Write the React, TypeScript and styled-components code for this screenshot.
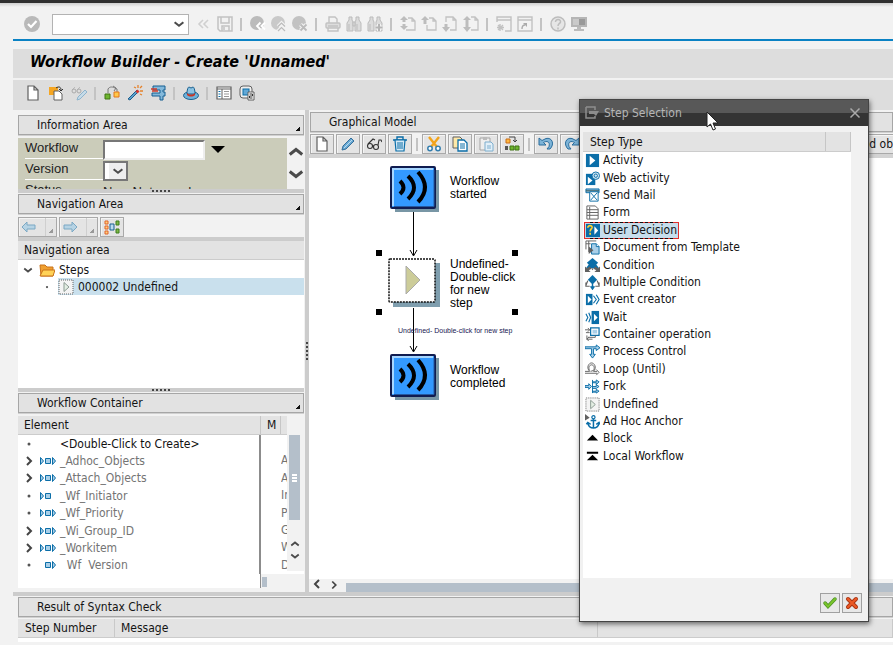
import React from "react";
import styled, { createGlobalStyle } from "styled-components";

const Global = createGlobalStyle`
  *, *::before, *::after { box-sizing: border-box; }
  html, body, #root { height: 100%; }
  body { margin: 0; background: #f2f2f2; color: #141414; font: 12px/16px "DejaVu Sans Condensed", "Noto Sans", sans-serif; overflow: hidden; }
  button, input, select { font: inherit; color: inherit; border-radius: 0; }
  table { border-spacing: 0; }
  th { font-weight: 400; text-align: left; }
  svg { display: block; flex: none; }
`;

/* ---------- icons ---------- */
const B = "#0b6ea8";
const L = "#a9cfe8";
const G = "#606060";
const D = "#c2c2c2";

const glyphs: Record<string, React.ReactNode> = {
  ok: <><circle cx="8" cy="8" r="8" fill="#b9b9b9" /><path d="M4 8l3 3 5.500-6" fill="none" stroke="#fff" strokeWidth="2.200" /></>,
  save: <g fill="none" stroke={D} strokeWidth="1.500"><path d="M1 1h14v14H3l-2-2zM4 1v6h8V1M5 15v-5h7v5M7 11v3" /></g>,
  back: <><circle cx="7" cy="7" r="7" fill="#bbb" /><path d="M10.500 6.500L7 10l3.500 3.500M15 6.500L11.500 10l3.500 3.500" fill="none" stroke="#fff" strokeWidth="1.800" /></>,
  up: <><circle cx="7" cy="7" r="7" fill="#c9c9c9" /><path d="M7 10.500L10.500 7l3.500 3.500M7 15l3.500-3.500L14 15" fill="none" stroke="#f2f2f2" strokeWidth="3.500" /><path d="M7 10.500L10.500 7l3.500 3.500M7 15l3.500-3.500L14 15" fill="none" stroke="#bbb" strokeWidth="1.200" /></>,
  cancel: <><circle cx="7" cy="7" r="7" fill="#c2c2c2" /><path d="M8.500 8.500l6 6M14.500 8.500l-6 6" stroke="#f2f2f2" strokeWidth="4" /><path d="M8.500 8.500l6 6M14.500 8.500l-6 6" stroke="#bbb" strokeWidth="1.800" /></>,
  print: <g fill="none" stroke={D} strokeWidth="1.400"><path d="M4 7V1h6l2 2v4" /><rect x="1" y="7" width="14" height="5" rx="1" fill="#ddd" /><path d="M3 12v3h10v-3M3 10h10" /></g>,
  find: <g fill="#dcdcdc" stroke="#bbb"><path d="M3 4V1h3v3l1 2v9H1V7zM10 4V1h3v3l2 3v8H9V6z" /><path d="M7 6h2v4H7zM3 8v6M11 8v6" /></g>,
  findnext: <g fill="#dcdcdc" stroke="#bbb"><path d="M3 4V1h3v3l1 2v9H1V7zM10 4V1h3v3l2 3v8H9V6zM3 8v6" /><path d="M12 8v7M8.500 11.500h7" stroke="#f2f2f2" strokeWidth="4" /><path d="M12 8v7M8.500 11.500h7" stroke="#b5b5b5" strokeWidth="2" /></g>,
  first: <g fill="none" stroke={D} strokeWidth="1.300"><path d="M8 2h4l3 3v9H6M12 2v3h3" /><path d="M4 0l4 4H5.500v2h-3V4H0zM4 14l4-4H5.500V8h-3v2H0z" fill="#bdbdbd" stroke="none" /></g>,
  prev: <g fill="none" stroke={D} strokeWidth="1.300"><path d="M8 2h4l3 3v9H6V9M12 2v3h3" /><path d="M4 0l4 4H5.500v4h-3V4H0z" fill="#bdbdbd" stroke="none" /></g>,
  next: <g fill="none" stroke={D} strokeWidth="1.300"><path d="M4 6V1h7l3 3v10H8M11 1v3h3" /><path d="M4 16l4-5H5.500V8h-3v3H0z" fill="#bdbdbd" stroke="none" /></g>,
  last: <g fill="none" stroke={D} strokeWidth="1.300"><path d="M8 1h4l3 3v10H8M12 1v3h3" /><path d="M4 0l4 4H5.500v7H8l-4 5-4-5h2.500V4H0z" fill="#bdbdbd" stroke="none" /></g>,
  session: <g fill="none" stroke={D} strokeWidth="1.400"><path d="M1 6V1h14v14H9M1 4h14" /><path d="M4 8v7M1 11.500h7M2 9l5 5M7 9l-5 5" /></g>,
  shortcut: <g fill="none" stroke={D} strokeWidth="1.400"><path d="M1 1h14v14H1zM1 4h14" /><path d="M5 13c0-3 1-4 3-4" stroke="#aaa" /><path d="M6 7h4v4z" fill="#aaa" stroke="none" /></g>,
  help: <><circle cx="8" cy="8" r="7" fill="#e6e6e6" stroke="#bdbdbd" strokeWidth="1.500" /><path d="M5.500 6c0-3.500 5.500-3 5 0-.3 1.500-2.500 1.500-2.500 4M8 11.500v2" fill="none" stroke="#bdbdbd" strokeWidth="1.500" /></>,
  monitor: <><path d="M0 1h16v10H0z" fill="#b5b5b5" /><path d="M2 3h6v6H2z" fill="#c9c9c9" /><path d="M8 3h6v6H8z" fill="#999" /><path d="M6 11h4v2h3v2H3v-2h3z" fill="#bbb" /></>,
  page: <path d="M3 1h6l4 4v10H3zM9 1v4h4" fill="#fff" stroke={G} strokeWidth="1.200" />,
  copyTo: <><path d="M1 2h9v8H1z" fill="#f5a623" /><path d="M6 6h5l3 3v6H6z" fill="#fff" stroke={G} /><path d="M8 3c3-2 5-1 5 2M11 4l2 2 2-2" fill="none" stroke="#333" /></>,
  display: <g fill="none"><path d="M1 5l3-3M6 5l3-3" stroke="#bbb" /><circle cx="3" cy="6" r="2" stroke="#aaa" /><circle cx="8" cy="6" r="2" stroke="#aaa" /><path d="M6 15l1-3 7-7 2 2-7 7z" fill="#c6dbe8" stroke="#8eb4cd" /></g>,
  model: <><path d="M4 8V4c2-3 5-2 7-1l2 1v3M9 1l3 2-2 3" fill="none" stroke="#777" /><path d="M1 9h5v5H1z" fill="#6eb52f" stroke="#407514" /><path d="M10 7h5v5h-5z" fill="#ffc849" stroke="#e2761b" /></>,
  wand: <><path d="M1 14L10 5l1.500 1.500L3 15z" fill="#5aa1cc" stroke="#1f5f8f" /><path d="M8.500 6.500l2-2 2 2-2 2z" fill="#d8342a" /><path d="M11 0v3M15 1l-2 2M13 6h3M13 9l2 1M7 2l2 1" stroke="#e5822b" strokeWidth="1.300" /></>,
  clamp: <><path d="M3 1h12v4h-2v2h2v4h-2v4h-3v-4H2V8h8V5H3z" fill="#83b8da" stroke="#155f92" /><path d="M1 4h6M2 6h6" stroke="#d23b2a" strokeWidth="1.500" /></>,
  hat: <><ellipse cx="8" cy="10.500" rx="7.500" ry="4" fill="#6fb2da" stroke="#1b618f" /><path d="M4 9c0-4 1-7 2-7l2 1 2-1c1 0 2 3 2 7z" fill="#8cc3e3" stroke="#1b618f" /><path d="M4 8c2 2 6 2 8 0v2c-2 2-6 2-8 0z" fill="#c93625" /></>,
  list: <><path d="M1 2h14v12H1z" fill="#fff" stroke={G} strokeWidth="1.200" /><path d="M1 4h14M6 4v10" stroke={G} /><path d="M2.500 6.500h2M2.500 9h2M2.500 11.500h2" stroke={B} /><path d="M8 6.500h5M8 9h5M8 11.500h5" stroke="#999" /></>,
  basic: <><rect x="1" y="1" width="12" height="12" rx="3" fill="#eee" stroke={G} /><rect x="4" y="4" width="6" height="6" fill="#62a8d6" stroke={B} /><path d="M9 7h6v8H9z" fill="#fff" stroke={G} /><path d="M10.500 9h3v2h-3v2h3" fill="none" stroke="#333" /></>,
  arrowL: <path d="M1 8l5-5v3h8v4H6v3z" fill="#b6d3e4" stroke="#7ba8c4" />,
  arrowR: <path d="M15 8l-5-5v3H2v4h8v3z" fill="#b6d3e4" stroke="#7ba8c4" />,
  tree: <><path d="M1 2h3v3H1zM1 7h3v3H1zM1 12h3v3H1z" fill="#ffd27a" stroke="#e2622a" /><path d="M6 5h4v6H6z" fill="#bcdcf0" stroke="#1b618f" /><path d="M12 2h3v4h-3zM12 10h3v4h-3z" fill="#7cba46" stroke="#3e7a1c" /></>,
  folder: <><path d="M1 3h5l2 2h6v9H2z" fill="#f0a030" stroke="#c9721a" /><path d="M1 14l3-6h12l-2 6z" fill="#ffd257" stroke="#c9721a" /></>,
  undefinedStep: <><path d="M1 1h14v14H1z" fill="#f4f4f4" stroke="#666" strokeDasharray="1 1" /><path d="M6 3.500l5 4.500-5 4.500z" fill="#e3eee3" stroke="#8b9a92" /></>,
  pencil: <><path d="M2 14l1-4 8-8 3 3-8 8z" fill="#69a9d3" stroke="#356f9b" /><path d="M4 12l8-8" stroke="#bcdcf0" /></>,
  glasses: <g fill="none" stroke="#333" strokeWidth="1.100"><circle cx="4" cy="10" r="2.500" /><circle cx="10" cy="11" r="2.500" /><path d="M6.500 10l1.500 0M2 8l5-5 2 1M12 9l1-5 2 0 1 2" /></g>,
  trash: <><path d="M1 4h14M5 4V1h6v3" fill="none" stroke={B} strokeWidth="1.400" /><path d="M3 4h10l-1 11H4z" fill="#d5e9f5" stroke={B} strokeWidth="1.200" /><path d="M6 6v7M8 6v7M10 6v7" stroke={B} /></>,
  cut: <><path d="M3 1l8 10M13 1L5 11" stroke="#f2a41c" strokeWidth="2.400" /><circle cx="4" cy="12.500" r="2.200" fill="#fff" stroke="#347eae" strokeWidth="1.500" /><circle cx="12" cy="12.500" r="2.200" fill="#fff" stroke="#347eae" strokeWidth="1.500" /></>,
  copy: <><path d="M1 1h7l2 2v9H1z" fill="#ffe9a8" stroke={G} /><path d="M6 4h6l3 3v8H6z" fill="#fff" stroke={B} strokeWidth="1.300" /><path d="M8 8h5M8 10h5M8 12h5" stroke={B} /></>,
  paste: <><path d="M2 2h10v12H2z" fill="#eee" stroke="#a5a5a5" /><path d="M5 1h4v3H5z" fill="#bbb" /><path d="M7 6h6l2 2v7H7z" fill="#e2eff8" stroke="#7daece" /><path d="M9 10h4M9 12h4" stroke="#7daece" /></>,
  insert: <><path d="M2 3h4v4H2z" fill="#ffb83e" stroke="#c86c18" /><path d="M5 1h6v5M9 4l2 2 2-2" fill="none" stroke="#444" /><path d="M1 10h3v4H1z" fill="#555" /><path d="M6 10h4v4H6zM11 10h4v4h-4z" fill="#6eb52f" stroke="#407514" /></>,
  undo: <path d="M1 2v7h7L5.500 6.500c3-2 7-1 5.500 4L9 13h3c5-5 2-12-4-10.500L4 4.500z" fill="#7db4d8" stroke="#2a6d9c" />,
  redo: <path d="M15 2v7H8l2.500-2.500c-3-2-7-1-5.500 4L7 13H4C-1 8 2 1 8 2.500l4 2z" fill="#7db4d8" stroke="#2a6d9c" />,
  activity: <><path d="M1 1h14v14H1z" fill={B} /><path d="M5 3l6 5-6 5z" fill="#fff" /></>,
  web: <><path d="M1 3h10v12H1z" fill={B} /><path d="M3 6l5 4-5 4z" fill="#fff" /><circle cx="11.500" cy="5" r="4" fill="#d4e8f3" stroke={B} /><circle cx="11.500" cy="5" r="1.800" fill="none" stroke={B} /></>,
  mail: <><path d="M1 1h14v4H1z" fill="#8ab9d6" stroke={B} /><path d="M1 3h14" stroke="#355" /><path d="M5 4h9v10H5z" fill="#fff" stroke={B} /><path d="M6 5l7 8M13 5l-7 8" stroke={B} /></>,
  form: <><path d="M2 1h9l3 3v11H2z" fill="#fff" stroke={G} /><path d="M2 5h12M2 8h12M2 11h12M5 2v13" stroke={G} /></>,
  decision: <><path d="M1 1h15v14H1z" fill={B} /><path d="M3 5c0-3 5-3 4.500 0-.3 1.500-2 1.500-2 4M5.500 10.500v2" fill="none" stroke="#ffd02c" strokeWidth="1.800" /><path d="M10 3.500l4 4.500-4 4.500z" fill="#fff" /></>,
  template: <><path d="M1 10V1h11M4 1v12M1 4h5" fill="none" stroke={G} /><path d="M7 4h5l3 3v8H7z" fill={L} stroke={B} /><path d="M12 4v3h3" fill="#fff" stroke={B} /><path d="M4 7l5 4-5 4z" fill={G} /></>,
  condition: <><path d="M8 0l6 5-3 3H5L2 5z" fill={B} /><path d="M4 7h8l3 4H1z" fill={B} /><path d="M0 15V9l2 2 3-2 3 4 3-4 3 2 2-2v6h-6l2-2-4-2-4 2 2 2z" fill={G} /></>,
  multi: <><path d="M8 0l5 5-5 5-5-5z" fill={B} /><path d="M3 6l-2 5M1 8v4h4M13 6l2 5M15 8v4h-4" fill="none" stroke={G} strokeWidth="1.300" /><path d="M8 9v5M6 12l2 3 2-3" fill="none" stroke={B} strokeWidth="1.500" /></>,
  event: <><path d="M1 2h7v12H1z" fill={B} /><path d="M3 4l4 4-4 4z" fill="#fff" /><path d="M9 4l3 4-3 4M12 3l3 5-3 5" fill="none" stroke={B} strokeWidth="1.200" /></>,
  wait: <><path d="M7 1h8v14H7z" fill={B} /><path d="M9.500 4l4 4-4 4z" fill="#fff" /><path d="M1 4l2 4-2 4M4 3l2 5-2 5" fill="none" stroke={B} strokeWidth="1.200" /></>,
  container: <><path d="M6 1h9v8H6z" fill="#fff" stroke={B} strokeWidth="1.300" /><path d="M8 3h5v4H8z" fill={L} /><path d="M0 3h5M3 1l2 2-2 2M5 6H1M2 9v4h6M4 11l-2 2 2 2M3 11h8V9" fill="none" stroke={G} /></>,
  process: <path d="M0 3h12V1l4 3-4 3V5h-3v6h2l-3 4-3-4h2V5H0z" fill={L} stroke={B} />,
  loop: <g fill="none" stroke={G}><path d="M0 12h13M0 10h5C1 6 4 1 7 1s6 5 2 9h4M5 9c-2-3 0-6 2-6s4 3 2 6l-3 1M12 8l3 3-3 3" /></g>,
  fork: <g fill={L} stroke={B}><path d="M0 7h4V5l3 3-3 3V9H0z" /><path d="M8 1v14M8 3h4V1l3 2-3 3V4H8M8 8h4V6l3 2-3 2H8M8 13h4v-2l3 2-3 2v-1H8" /></g>,
  anchor: <><path d="M0 0l5 4-5 3z" fill={G} /><circle cx="9" cy="3.500" r="1.700" fill="#fff" stroke={B} strokeWidth="1.300" /><path d="M9 5v9M6 7h6M3 10c1 4 4 5 6 5s5-1 6-5M1.500 11L3 9l3 2M12 11l3-2 1 2" fill="none" stroke={B} strokeWidth="1.600" /></>,
  block: <path d="M8 4l6 6H2z" fill="#000" />,
  local: <path d="M2 3h12v2H2zM8 6l6 6H2z" fill="#000" />,
  exportIn: <><path d="M2 2h9v3M11 11v2H2V2" fill="none" stroke="#8d8d8d" strokeWidth="1.500" /><path d="M5 6h10l-3 5-2-2H5z" fill="#8d8d8d" /></>,
  accept: <path d="M3 8l3 3.500L13 4" fill="none" stroke="#4b8f24" strokeWidth="3.500" strokeLinecap="round" />,
  reject: <path d="M4 4l8 8M12 4l-8 8" stroke="#a93312" strokeWidth="4" strokeLinecap="round" />,
  down: <path d="M3 6l5 4 5-4" fill="none" stroke="#4b4b4b" strokeWidth="2.400" />,
  upArrow: <path d="M3 10l5-4 5 4" fill="none" stroke="#4b4b4b" strokeWidth="2.400" />,
  right: <path d="M6 4l4 4-4 4" fill="none" stroke="#444" strokeWidth="2" />,
  left: <path d="M10 4L6 8l4 4" fill="none" stroke="#444" strokeWidth="2" />,
  dot: <circle cx="8" cy="8" r="1.500" fill="#555" />,
  close: <path d="M2 2l12 12M14 2L2 14" stroke="#aaa" strokeWidth="2" />,
  more: <path d="M7 4L3 8l4 4M12 4L8 8l4 4" fill="none" stroke="#d0d0d0" strokeWidth="1.600" />,
};

const Icon = ({ name, size = 16 }: { name: string; size?: number }) => (
  <svg width={size} height={size} viewBox="0 0 16 16" aria-hidden="true">
    {glyphs[name]}
    {name === "accept" && <path d="M3 8l3 3.500L13 4" fill="none" stroke="#7ac52c" strokeWidth="2" strokeLinecap="round" />}
    {name === "reject" && <path d="M4 4l8 8M12 4l-8 8" stroke="#ec5a26" strokeWidth="2.200" strokeLinecap="round" />}
  </svg>
);

const Params = ({ input = true, output = true }: { input?: boolean; output?: boolean }) => (
  <svg width="16" height="10" viewBox="0 0 16 10" aria-hidden="true">
    {input && <path d="M.5 1.500L3.500 5 .5 8.500z" fill={L} stroke={B} />}
    <path d="M5.500 2.500h5v5h-5z" fill={L} stroke={B} />
    {output && <path d="M12.500 1.500l3 3.500-3 3.500z" fill={L} stroke={B} />}
  </svg>
);

/* ---------- shell ---------- */
const Page = styled.div`
  position: relative; height: 100vh; display: flex; flex-direction: column; overflow: hidden;
  border-top: 3px solid #303030;
`;
const CommandBar = styled.header`
  display: flex; align-items: center; gap: 5px; height: 36px; padding: 6px 0 0 24px; flex: none;
  background: linear-gradient(#cfcfcf, #f2f2f2 4px);
`;
const IconButton = styled.button`
  display: grid; place-items: center; width: 16px; height: 20px; padding: 0; border: 0; background: none; flex: none;
`;
const CommandField = styled.label`
  display: flex; align-items: center; width: 137px; height: 21px; margin: 0 2px 0 7px; padding-right: 2px;
  background: #fff; border: 1px solid #b3b3b3;
`;
const CommandInput = styled.input`
  flex: 1; min-width: 0; height: 17px; border: 0; outline: 0; background: transparent;
`;
const Rule = styled.span<{ $spread?: boolean }>`
  width: 2px; height: 13px; margin: 0 ${(p) => (p.$spread ? "3px 0 2px" : "1px 0 0")}; background: #c3c3c3; flex: none;
`;
const ToolRule = styled(Rule)` margin: 0 2px; `;
const Workspace = styled.div`
  margin-left: 13px; flex: 1; min-height: 0; display: flex; flex-direction: column; border-top: 2px solid #0a82c4;
`;
const TitleBar = styled.h1`
  margin: 8px 0 1px; padding-left: 17px; height: 29px; flex: none; background: #ddd; color: #000;
  font: italic 700 16px/26px "DejaVu Sans Condensed", "Noto Sans", sans-serif;
`;
const AppBar = styled.div`
  display: flex; align-items: center; gap: 7px; height: 31px; padding: 0 0 4px 12px; background: #ddd; flex: none;
  border-top: 1px solid #f2f2f2;
`;
const Split = styled.main`
  flex: 1; min-height: 0; display: grid; grid-template-columns: 292px 4px minmax(0, 1fr);
`;
const Side = styled.aside`
  display: flex; flex-direction: column; min-height: 0; padding: 4px 1px 4px 5px;
`;
const Bar = styled.div`
  display: grid; place-items: center; background: #ccc; flex: none;
`;
const HBar = styled(Bar)` height: 4px; `;
const Grip = styled.span<{ $vertical?: boolean }>`
  width: ${(p) => (p.$vertical ? 2 : 18)}px; height: ${(p) => (p.$vertical ? 18 : 2)}px;
  background: repeating-linear-gradient(${(p) => (p.$vertical ? "180deg" : "90deg")}, #444 0 2px, transparent 2px 4px);
`;
const PanelTitle = styled.h2`
  position: relative; margin: 1px 0; height: 20px; padding-left: 18px; flex: none;
  font: 400 12px/18px "DejaVu Sans Condensed", "Noto Sans", sans-serif; background: #e2e2e2; border: 1px solid #a6a6a6;
  box-shadow: 0 1px #d0d0d0;
`;
const Corner = styled.span<{ $faint?: boolean }>`
  position: absolute; right: 3px; bottom: 3px; width: 4px; height: 4px;
  background: linear-gradient(135deg, transparent 45%, ${(p) => (p.$faint ? "#999" : "#111")} 50%);
`;

/* ---------- information panel ---------- */
const InfoPanel = styled.section`
  display: flex; height: 51px; margin: 2px 0 0; overflow: hidden; flex: none; background: #cbccba;
`;
const InfoFields = styled.form`
  flex: 1; min-width: 0; padding: 1px 0 0 7px; font: 13px/16px "Liberation Sans", Arial, sans-serif; color: #222;
`;
const FieldRow = styled.div` display: flex; align-items: center; height: 21px; `;
const FieldLabel = styled.label`
  width: 78px; height: 20px; line-height: 18px; border-bottom: 1px solid #fff; margin-bottom: 1px;
`;
const FieldInput = styled.input`
  width: 102px; height: 20px; background: #fff; border: 2px solid; border-color: #777 #eee #eee #777; outline: 0;
`;
const PickButton = styled.button`
  width: 14px; height: 7px; margin-left: 6px; padding: 0; border: 0; background: #000;
  clip-path: polygon(0 0, 100% 0, 50% 100%);
`;
const VersionBox = styled.span`
  display: grid; width: 25px; height: 20px; background: #fff; border: 2px solid #777; padding-left: 4px;
`;
const VersionIcon = styled.span` grid-area: 1 / 1; display: grid; place-items: center; background: #eee; pointer-events: none; `;
const VersionSelect = styled.select`
  grid-area: 1 / 1; width: 100%; height: 16px; padding: 0; border: 0; appearance: none; background: #eee;
`;
const Scroll = styled.div`
  display: flex; flex-direction: column; align-items: center; width: 17px; background: #f2f2f2; padding-top: 4px; gap: 2px;
`;

/* ---------- navigation ---------- */
const NavTools = styled.div` display: flex; gap: 2px; height: 22px; padding-top: 2px; flex: none; `;
const ToolButton = styled.button<{ $wide?: boolean; $text?: boolean }>`
  position: relative; display: flex; align-items: center; flex: none;
  width: ${(p) => (p.$wide ? 39 : p.$text ? 120 : 24)}px; height: 20px; padding: 0 ${(p) => (p.$wide ? 2 : p.$text ? 0 : 3)}px;
  justify-content: ${(p) => (p.$text ? "flex-end" : "flex-start")};
  background: #e4e4e4; border: 1px solid #a9a9a9; border-right-width: ${(p) => (p.$text ? 0 : 1)}px; box-shadow: inset 1px 1px #f4f4f4;
`;
const ButtonPart = styled.span`
  position: absolute; inset: 0 0 0 auto; width: 11px; border-left: 1px solid #cfcfcf;
`;
const ColumnTitle = styled.div`
  height: 19px; padding-left: 6px; line-height: 18px; background: #e3e3e3; border-bottom: 1px solid #ccc; flex: none;
`;
const Tree = styled.ul`
  flex: 1; min-height: 94px; margin: 0; padding: 1px 0 0; list-style: none; background: #fff;
`;
const TreeItem = styled.li<{ $depth: number }>`
  display: flex; align-items: center; height: 17px; gap: 5px; padding-left: ${(p) => 4 + p.$depth * 19}px;
`;
const TreeLabel = styled.span<{ $selected?: boolean }>`
  display: flex; align-items: center; gap: 4px; flex: 1; height: 17px; background: ${(p) => (p.$selected ? "#c9e0ed" : "none")};
`;

/* ---------- container table ---------- */
const ContainerPanel = styled.section`
  display: grid; grid-template-columns: minmax(0, 1fr) 17px; height: 172px; margin-top: 2px; overflow: hidden; background: #fff; flex: none;
`;
const ElementTable = styled.table`
  display: flex; flex-direction: column; height: 158px; overflow: hidden;
  thead { display: block; height: 19px; background: #e3e3e3; border-bottom: 1px solid #ccc; }
  tbody { display: grid; grid-template-rows: repeat(8, minmax(0, 1fr)); flex: 1; }
  tr { display: grid; grid-template-columns: 243px 20px 8px; align-items: stretch; }
  th, td { padding: 0; overflow: hidden; white-space: pre; }
  th { line-height: 18px; border-right: 1px solid #c6c6c6; padding-left: 6px; }
  td:first-child { border-right: 2px solid #8c8c8c; }
`;
const ElementCell = styled.span<{ $strong?: boolean }>`
  display: flex; align-items: center; height: 100%; gap: 3px; padding-left: 3px; color: ${(p) => (p.$strong ? "#111" : "#747474")};
`;
const IconSlot = styled.span` display: flex; width: 16px; margin-right: 1px; flex: none; `;
const Gray = styled.span` color: #747474; `;
const TableScroll = styled.div`
  display: flex; flex-direction: column; align-items: flex-start; background: #f2f2f2; padding: 19px 0 0 2px; height: 155px;
`;
const Thumb = styled.div`
  display: grid; place-items: center; width: 11px; height: 85px; margin-bottom: 18px; background: #b4bfca;
  &::before { content: ""; width: 5px; height: 8px; background: repeating-linear-gradient(#fff 0 2px, transparent 2px 3px); }
`;
const HScrollSmall = styled.div`
  grid-column: 1 / -1; align-self: end; justify-self: end; width: 44px; height: 16px; padding: 3px 1px; background: #f2f2f2;
  border-left: 1px solid #8c8c8c;
  &::before { content: ""; display: block; width: 5px; height: 10px; background: #b4bfca; }
`;

/* ---------- graphical model ---------- */
const ModelPane = styled.section` display: flex; flex-direction: column; min-width: 0; min-height: 0; `;
const ModelTop = styled.div` padding: 1px 0 0 1px; flex: none; border-bottom: 4px solid #d3d3d3; `;
const ModelTools = styled.div` display: flex; align-items: center; gap: 2px; height: 20px; margin-top: 2px; `;
const Push = styled.span` flex: 1; `;
const Canvas = styled.div`
  position: relative; flex: 1; min-height: 0; background: #fff; overflow: hidden;
  font: 12px/13px "Liberation Sans", Arial, sans-serif; color: #000;
`;
const Wires = styled.svg` position: absolute; left: 0; top: 0; `;
const NodeLabel = styled.div<{ $y: number }>`
  position: absolute; left: 141px; top: ${(p) => p.$y}px; white-space: pre-line;
`;
const WireLabel = styled.div`
  position: absolute; left: 89px; top: 167px; font-size: 7px; line-height: 11px; white-space: nowrap; color: #171752;
`;
const ModelScroll = styled.div`
  display: flex; align-items: flex-end; gap: 2px; height: 13px; background: #f2f2f2; flex: none;
`;
const Track = styled.div` flex: 1; height: 9px; margin-left: 3px; background: #b4bfca; `;

/* ---------- syntax check ---------- */
const Result = styled.section` height: 53px; flex: none; `;
const ResultInner = styled.div` padding-left: 5px; `;
const ResultTable = styled.table`
  width: 100%; table-layout: fixed; margin-top: 2px; background: #e3e3e3; border-bottom: 4px solid #fff;
  th { height: 19px; padding: 0 7px; line-height: 18px; border-bottom: 1px solid #ccc; border-right: 1px solid #c9c9c9; }
  th:nth-child(1) { width: 97px; }
  th:nth-child(2) { width: 483px; padding-left: 6px; }
`;

/* ---------- dialog ---------- */
const Dialog = styled.div`
  position: absolute; left: 579px; top: 96px; width: 290px; background: #f1f1f1; border: 1px solid #444;
  box-shadow: 1px 2px 5px rgba(0, 0, 0, 0.55);
`;
const DialogTitle = styled.div`
  display: flex; align-items: center; gap: 4px; height: 26px; padding: 0 5px 0 4px; color: #b5b5b5;
  background: linear-gradient(#585858 0 50%, #343434 50%);
`;
const DialogName = styled.span` flex: 1; `;
const StepTable = styled.table`
  display: block; margin: 6px 17px 0 3px; height: 446px; background: #fff;
  thead { display: block; height: 20px; background: #e3e3e3; border-bottom: 1px solid #ccc; }
  thead tr { display: grid; grid-template-columns: 243px 1fr; }
  th { padding: 0 0 0 7px; line-height: 20px; height: 19px; border-right: 1px solid #c6c6c6; }
  tbody { display: grid; grid-template-rows: repeat(18, minmax(0, 1fr)); height: 313px; }
  tbody tr { display: block; min-height: 0; }
  td { display: flex; height: 100%; padding: 0 0 0 1px; }
`;
const StepChoice = styled.button<{ $selected?: boolean }>`
  position: relative; display: flex; align-items: center; gap: 3px; height: 100%; padding: 0 1px 0 0; line-height: 15px;
  border: 1px solid ${(p) => (p.$selected ? "#e2322e" : "transparent")}; background: ${(p) => (p.$selected ? "#c6deec" : "none")};
  &::after {
    content: ""; position: absolute; inset: -1px 5px; pointer-events: none;
    border: solid transparent; border-width: 1px 0;
    ${(p) => (p.$selected ? "border-color: #111; border-style: dashed;" : "")}
  }
`;
const DialogFooter = styled.div`
  display: flex; justify-content: flex-end; gap: 2px; padding: 15px 6px 8px 0;
`;
const FooterButton = styled.button`
  display: grid; place-items: center; width: 20px; height: 20px; padding: 0; background: #e8e8e8; border: 1px solid #a0a0a0;
`;
const Pointer = styled.svg` position: absolute; left: 706px; top: 108px; `;

const commandIcons = ["save", "|", "back", "up", "cancel", "|", "print", "find", "findnext", "|", "first", "prev", "next", "last", "|", "session", "shortcut", "|", "help", "monitor"];
const appIcons = ["page", "copyTo", "display", "|", "model", "wand", "clamp", "|", "hat", "|", "list", "basic"];
const modelIcons = ["page", "pencil", "glasses", "trash", "|", "cut", "copy", "paste", "insert", "|", "undo", "redo"];

const elements = [
  { name: "<Double-Click to Create>", open: false, type: "" },
  { name: "_Adhoc_Objects", open: true, io: "both", type: "A" },
  { name: "_Attach_Objects", open: true, io: "both", type: "A" },
  { name: "_Wf_Initiator", open: false, io: "in", type: "In" },
  { name: "_Wf_Priority", open: false, io: "both", type: "P" },
  { name: "_Wi_Group_ID", open: true, io: "both", type: "G" },
  { name: "_Workitem", open: true, io: "both", type: "W" },
  { name: "  Wf  Version", open: false, io: "out", type: "D" },
];

const steps = [
  ["activity", "Activity"], ["web", "Web activity"], ["mail", "Send Mail"], ["form", "Form"], ["decision", "User Decision"],
  ["template", "Document from Template"], ["condition", "Condition"], ["multi", "Multiple Condition"], ["event", "Event creator"],
  ["wait", "Wait"], ["container", "Container operation"], ["process", "Process Control"], ["loop", "Loop (Until)"], ["fork", "Fork"],
  ["undefinedStep", "Undefined"], ["anchor", "Ad Hoc Anchor"], ["block", "Block"], ["local", "Local Workflow"],
];

const EventNode = ({ y }: { y: number }) => (
  <g transform={`translate(81 ${y})`}>
    <path d="M5 4h44v42H5z" fill="#7896a5" />
    <rect x="1" y="1" width="44" height="41" rx="1" fill="#3399ff" stroke="#101c50" strokeWidth="2" />
    <path d="M3 40V3h40" fill="none" stroke="#a6d6ff" strokeWidth="2" />
    <path d="M4 40.500h40V4" fill="none" stroke="#2458a0" />
    <path d="M10 15q7 6.500 0 13M18 10q12 11.500 0 23M28 6q14 15.500 0 30" fill="none" stroke="#000" strokeWidth="4" />
  </g>
);

export default function App() {
  return (
    <>
      <Global />
      <Page>
        <CommandBar>
          <IconButton aria-label="Enter"><Icon name="ok" /></IconButton>
          <CommandField>
            <CommandInput aria-label="Command" />
            <Icon name="down" size={14} />
          </CommandField>
          <IconButton aria-label="Collapse"><Icon name="more" /></IconButton>
          {commandIcons.map((n, i) => n === "|" ? <Rule key={i} $spread /> : <IconButton key={i} aria-label={n}><Icon name={n} /></IconButton>)}
        </CommandBar>
        <Workspace>
          <TitleBar>Workflow Builder - Create 'Unnamed'</TitleBar>
          <AppBar>
            {appIcons.map((n, i) => n === "|" ? <Rule key={i} /> : <IconButton key={i} aria-label={n}><Icon name={n} /></IconButton>)}
          </AppBar>
          <Split>
            <Side>
              <PanelTitle>Information Area<Corner /></PanelTitle>
              <InfoPanel>
                <InfoFields>
                  <FieldRow>
                    <FieldLabel htmlFor="workflow">Workflow</FieldLabel>
                    <FieldInput id="workflow" />
                    <PickButton type="button" aria-label="Choose workflow" />
                  </FieldRow>
                  <FieldRow>
                    <FieldLabel htmlFor="version">Version</FieldLabel>
                    <VersionBox>
                      <VersionSelect id="version" />
                      <VersionIcon><Icon name="down" size={14} /></VersionIcon>
                    </VersionBox>
                  </FieldRow>
                  <FieldRow>
                    <FieldLabel as="span">Status</FieldLabel>
                    <span>New Not saved</span>
                  </FieldRow>
                </InfoFields>
                <Scroll><Icon name="upArrow" size={20} /><Icon name="down" size={20} /></Scroll>
              </InfoPanel>
              <HBar><Grip /></HBar>
              <PanelTitle>Navigation Area<Corner /></PanelTitle>
              <NavTools>
                <ToolButton $wide aria-label="Back"><Icon name="arrowL" /><ButtonPart><Corner $faint /></ButtonPart></ToolButton>
                <ToolButton $wide aria-label="Forward"><Icon name="arrowR" /><ButtonPart><Corner $faint /></ButtonPart></ToolButton>
                <ToolButton aria-label="Overview"><Icon name="tree" /></ToolButton>
              </NavTools>
              <HBar />
              <ColumnTitle>Navigation area</ColumnTitle>
              <Tree>
                <TreeItem $depth={0}><Icon name="down" size={12} /><TreeLabel><Icon name="folder" />Steps</TreeLabel></TreeItem>
                <TreeItem $depth={1}><Icon name="dot" size={12} /><TreeLabel $selected><Icon name="undefinedStep" />000002 Undefined</TreeLabel></TreeItem>
              </Tree>
              <HBar><Grip /></HBar>
              <PanelTitle>Workflow Container<Corner /></PanelTitle>
              <ContainerPanel>
                <ElementTable>
                  <thead><tr><th>Element</th><th>M</th><th /></tr></thead>
                  <tbody>
                    {elements.map((e) => (
                      <tr key={e.name}>
                        <td>
                          <ElementCell $strong={!e.io}>
                            <Icon name={e.open ? "right" : "dot"} />
                            <IconSlot>{e.io && <Params input={e.io !== "out"} output={e.io !== "in"} />}</IconSlot>
                            <span>{e.name}</span>
                          </ElementCell>
                        </td>
                        <td />
                        <td><Gray>{e.type}</Gray></td>
                      </tr>
                    ))}
                  </tbody>
                </ElementTable>
                <TableScroll>
                  <Thumb />
                  <Icon name="upArrow" size={12} />
                  <Icon name="down" size={12} />
                </TableScroll>
                <HScrollSmall />
              </ContainerPanel>
            </Side>
            <Bar><Grip $vertical /></Bar>
            <ModelPane>
              <ModelTop>
                <PanelTitle>Graphical Model</PanelTitle>
                <ModelTools>
                  {modelIcons.map((n, i) => n === "|" ? <ToolRule key={i} /> : <ToolButton key={i} aria-label={n}><Icon name={n} /></ToolButton>)}
                  <Push />
                  <ToolButton $text>ed ob</ToolButton>
                </ModelTools>
              </ModelTop>
              <Canvas>
                <Wires width="230" height="250" aria-hidden="true">
                  <EventNode y={8} />
                  <path d="M104.500 54v43M104.500 150v43M101 92l3.500 6 3.500-6M101 188l3.500 6 3.500-6" fill="none" stroke="#000" />
                  <path d="M84 105h47v44H84z" fill="#7f9eae" />
                  <rect x="80" y="101" width="46" height="43" rx="1" fill="#fff" stroke="#111" strokeWidth="1.500" strokeDasharray="2 1" />
                  <path d="M97 108l14 14-14 14z" fill="#cccc99" stroke="#aaa" />
                  <path d="M67 92h6v6h-6zM203 92h6v6h-6zM67 151h6v6h-6zM203 151h6v6h-6z" fill="#000" />
                  <EventNode y={196} />
                </Wires>
                <NodeLabel $y={17}>{"Workflow\nstarted"}</NodeLabel>
                <NodeLabel $y={100}>{"Undefined-\nDouble-click\nfor new\nstep"}</NodeLabel>
                <NodeLabel $y={206}>{"Workflow\ncompleted"}</NodeLabel>
                <WireLabel>Undefined- Double-click for new step</WireLabel>
              </Canvas>
              <ModelScroll><Icon name="left" /><Icon name="right" size={14} /><Track /></ModelScroll>
            </ModelPane>
          </Split>
          <Result>
            <HBar />
            <ResultInner>
              <PanelTitle>Result of Syntax Check</PanelTitle>
              <ResultTable><thead><tr><th>Step Number</th><th>Message</th><th /></tr></thead></ResultTable>
            </ResultInner>
          </Result>
        </Workspace>
        <Dialog role="dialog" aria-label="Step Selection">
          <DialogTitle>
            <Icon name="exportIn" />
            <DialogName>Step Selection</DialogName>
            <IconButton aria-label="Close"><Icon name="close" size={12} /></IconButton>
          </DialogTitle>
          <StepTable>
            <thead><tr><th>Step Type</th><th /></tr></thead>
            <tbody>
              {steps.map(([icon, name]) => (
                <tr key={name}><td><StepChoice $selected={icon === "decision"}><Icon name={icon} size={15} />{name}</StepChoice></td></tr>
              ))}
            </tbody>
          </StepTable>
          <DialogFooter>
            <FooterButton aria-label="Accept"><Icon name="accept" /></FooterButton>
            <FooterButton aria-label="Cancel"><Icon name="reject" /></FooterButton>
          </DialogFooter>
        </Dialog>
        <Pointer width="13" height="20" viewBox="0 0 13 20" aria-hidden="true">
          <path d="M1 1v15l3.500-3 2.500 6 2.500-1-2.500-6H12z" fill="#fff" stroke="#222" />
        </Pointer>
      </Page>
    </>
  );
}
